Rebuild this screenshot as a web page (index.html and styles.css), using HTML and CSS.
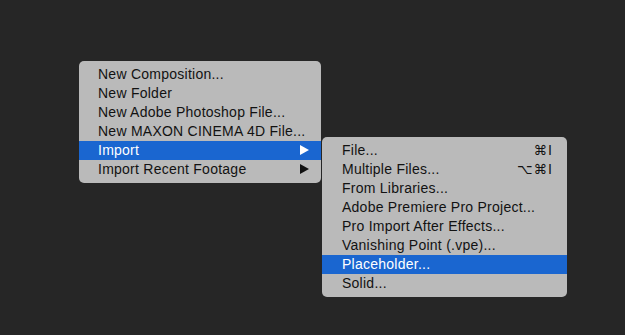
FILE: index.html
```html
<!DOCTYPE html>
<html lang="en">
<head>
    <meta charset="UTF-8">
    <title>Import Menu</title>
    <link rel="stylesheet" href="styles.css">
</head>
<body>
    <div class="menu main-menu">
        <div class="menu-item">New Composition...</div>
        <div class="menu-item">New Folder</div>
        <div class="menu-item">New Adobe Photoshop File...</div>
        <div class="menu-item">New MAXON CINEMA 4D File...</div>
        <div class="menu-item active">Import <span class="arrow"></span></div>
        <div class="menu-item">Import Recent Footage <span class="arrow"></span></div>
    </div>

    <div class="menu sub-menu">
        <div class="menu-item">File... <span class="shortcut">⌘I</span></div>
        <div class="menu-item">Multiple Files... <span class="shortcut">⌥⌘I</span></div>
        <div class="menu-item">From Libraries...</div>
        <div class="menu-item">Adobe Premiere Pro Project...</div>
        <div class="menu-item">Pro Import After Effects...</div>
        <div class="menu-item">Vanishing Point (.vpe)...</div>
        <div class="menu-item active">Placeholder...</div>
        <div class="menu-item">Solid...</div>
    </div>
</body>
</html>
```

FILE: styles.css
```css
body {
    margin: 0;
    width: 625px;
    height: 335px;
    background: #262626;
    font-family: 'Liberation Sans', Arial, sans-serif;
    position: relative;
    overflow: hidden;
}

.menu {
    position: absolute;
    background: #bababa;
    border-radius: 5px;
    padding: 4px 0;
    box-sizing: border-box;
}

.main-menu {
    left: 79px;
    top: 61px;
    width: 242px;
    height: 122px;
}

.sub-menu {
    left: 322px;
    top: 137px;
    width: 245px;
    height: 160px;
}

.menu-item {
    display: flex;
    align-items: center;
    justify-content: space-between;
    box-sizing: border-box;
    height: 19px;
    padding: 0 12px 1px 20px;
    font-size: 14px;
    letter-spacing: 0.25px;
    color: #121212;
    white-space: nowrap;
}

.main-menu .menu-item {
    padding-left: 19px;
}

.sub-menu .menu-item {
    padding-right: 14px;
}

.menu-item.active {
    background: #1a66d0;
    color: #fff;
}

.arrow {
    width: 0;
    height: 0;
    border-top: 5.5px solid transparent;
    border-bottom: 5.5px solid transparent;
    border-left: 9px solid #111;
}

.active .arrow {
    border-left-color: #fff;
}

.shortcut {
    font-family: 'DejaVu Sans', sans-serif;
    font-size: 13.5px;
    letter-spacing: 1px;
}
```
